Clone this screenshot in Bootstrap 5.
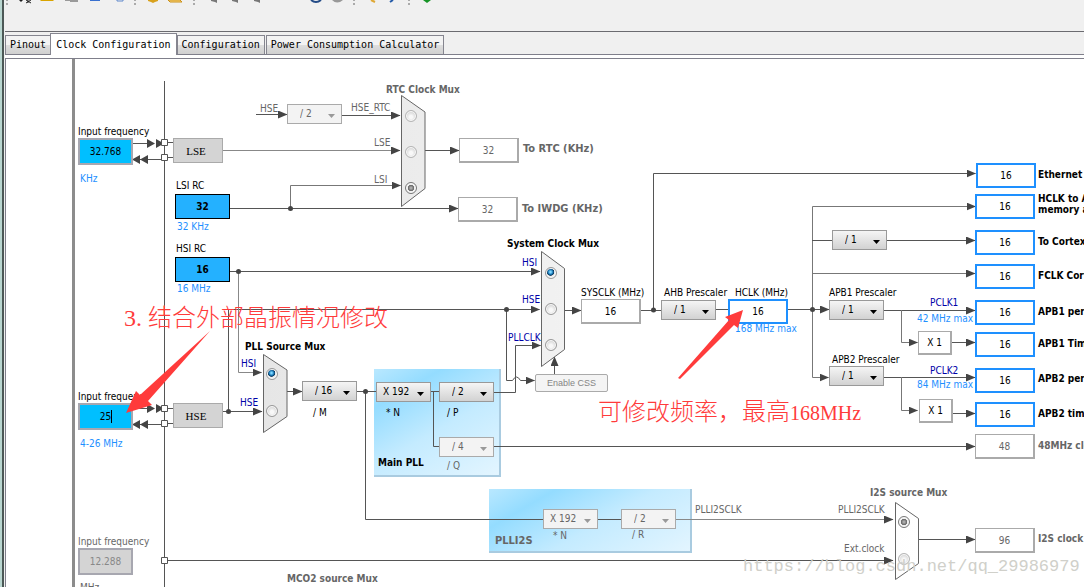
<!DOCTYPE html>
<html lang="en">
<head>
<meta charset="utf-8">
<meta name="viewport" content="width=device-width, initial-scale=1">
<title>Clock Configuration</title>
<link href="https://cdn.jsdelivr.net/npm/bootstrap@5.3.0/dist/css/bootstrap.min.css" rel="stylesheet">
<style>
body{font:10px/14px "DejaVu Sans Condensed","DejaVu Sans",sans-serif;color:#000;background:#f0f0f0}
.shell{border-left:2px solid #b9d6d0;box-shadow:inset 2px 0 #4c5856;padding-left:3px}
.toolstrip{height:32px;border-bottom:1px solid #6b6b70}
.toolstrip svg{display:block}
.tabstrip{height:23px;border-bottom:1px solid #7f7f8b}
.tabstrip button{font:10px/16px "DejaVu Sans Mono",monospace;color:#000;height:19px;padding:0 4px;border:1px solid #85858f;border-bottom:0;border-radius:0;margin-right:1px;background:linear-gradient(#f3f3f3 0 50%,#dedede 51%,#d0d0d0)}
.tabstrip button.active{height:22px;margin:0 0 -1px -2px;padding:0 5px;background:#fff}
.pane{margin:3px 0 0;border:solid #7f7f8b;border-width:1px 0 0 1px}
.sidepane{width:69px;border-right:3px solid #8c8c8c}
.board{min-width:0}
/* diagram coordinates are measured from the window corner */
.at{position:absolute;left:calc((var(--x) - 75)*1px);top:calc((var(--y) - 59)*1px);white-space:nowrap}
.wires{position:absolute;left:0;top:0;pointer-events:none;overflow:visible}
.fld{width:60px;height:25px;border:2px solid #aaa;border-width:1px 2px 2px 1px;background:#fff;text-align:center;padding:0;font-size:10px;color:#000;outline:0;border-radius:0}
.fld.out{border:2px solid #1e90ff}
.fld.pin{width:55px;height:27px;background:#00bfff;border:2px solid #a7a7b0}
.fld.osc{width:55px;height:25px;background:#24b1ff;border:1px solid #000;font-weight:bold}
.fld.off,.grey{color:#666}
.fld.pin.off{background:#d4d4d4;color:#888}
.fld.mul{width:34px;height:24px}
.big{font-size:11px}
.sel{width:55px;height:20px;border:1px solid #999;border-radius:0;appearance:none;font-size:10px;line-height:16px;padding:0 0 0 12px;color:#000;background:url("data:image/svg+xml,%3Csvg xmlns='http://www.w3.org/2000/svg' width='7' height='4'%3E%3Cpath d='M0 0h7L3.5 4z'/%3E%3C/svg%3E") no-repeat right 6px top 9px,linear-gradient(#f5f5f5,#d2d2d2)}
.sel.tight{padding-left:6px}
.sel:disabled{color:#666;opacity:1;background:url("data:image/svg+xml,%3Csvg xmlns='http://www.w3.org/2000/svg' width='7' height='4'%3E%3Cpath fill='%23999' d='M0 0h7L3.5 4z'/%3E%3C/svg%3E") no-repeat right 6px top 9px,#f3f3f3;border-color:#aaa}
.rad{appearance:none;width:12px;height:12px;border-radius:50%;margin:0;border:1px solid #999;background:radial-gradient(circle at 50% 60%,#f8f8f8 20%,#d0d0d0 75%);box-shadow:inset 0 0 0 1px #fafafa}
.rad:checked{background:radial-gradient(circle at 45% 40%,#7fd8ff 0 8%,#1675b4 30%,#0b3557 42%,#eee 50%)}
.rad:disabled{border-color:#b5b5b5}
.rad:disabled:checked{border-color:#777;background:radial-gradient(circle,#aaa 12%,#666 40%,#eee 50%)}
.chip{width:50px;height:25px;border:1px solid #aaa;background:#d4d4d4;font:11px/20px "Liberation Serif",serif;color:#000;padding:0 4px 0 0;border-radius:0;text-align:center}
.css-btn{width:73px;height:18px;border:1px solid #aaa;border-radius:2px;background:#f4f4f4;color:#858585;font:9px/14px "Liberation Sans",sans-serif;padding:0}
.pll{background:linear-gradient(150deg,#b9e8ff,#94dcff 22%,#c4ebff 55%,#e3f5ff);border:solid #a9cbe0;border-width:0 2px 2px 0}
.blue{color:#1e90ff}.sig{color:#0000a8}
.note{font:300 24px/30px "Noto Sans CJK SC",sans-serif;color:#ff3b3b}
.note span{font-family:"Liberation Serif",serif}
.note .rate{font-size:20px}
.wm{font:17px/22px "Liberation Mono",monospace;color:#d0d0ca;pointer-events:none}
</style>
</head>
<body>
<main class="shell vh-100 overflow-hidden d-flex flex-column">
<header class="toolstrip flex-shrink-0">
<svg width="440" height="7" viewBox="5 0 440 7" aria-hidden="true">
<g fill="#aaa"><path d="M6 0h2v1h-2zM6 3h2v2h-2zM134 0h2v1h-2zM134 3h2v2h-2zM193 0h2v1h-2zM193 3h2v2h-2zM353 0h2v1h-2zM353 3h2v2h-2zM408 0h2v1h-2zM408 3h2v2h-2z"/></g>
<path d="M20 0h2v1h-2zM26 0l5 3M31 0l-5 3M28 0v3" stroke="#222"/>
<path d="M40 0h14l-1 1H41z" fill="#d9a400"/><path d="M65 0h13v2H70V1h-5z" fill="#9a9a9a"/><path d="M90 0h10v1H90z" fill="#3970cf"/>
<path d="M117 0v1h6V0" fill="none" stroke="#5f88cc"/><path d="M148 0h10v1l-3 1-2 1-2-1-3-1z" fill="#d8a11c"/><path d="M168 0h12l2 2H170z" fill="#ffd97c" stroke="#c98f18"/>
<path d="M211 0h6v3l-2-1-4-1zM232 0h6v3l-2-1-4-1zM254 0h6v3l-2-1-4-1z" fill="#777"/>
<path d="M311 0q5 4 10 0" fill="none" stroke="#244c87" stroke-width="2"/><path d="M332 0q5 5 11 0" fill="#999"/><path d="M371 0l4 2" stroke="#dfa834" stroke-width="2"/><path d="M393 0l-3 2" stroke="#245aa8" stroke-width="2"/><path d="M423 0h8l-4 3z" fill="#169426"/>
</svg>
</header>
<nav class="tabstrip d-flex align-items-end flex-shrink-0" role="tablist">
<button type="button" role="tab">Pinout</button><button type="button" role="tab" class="active" aria-selected="true">Clock Configuration</button><button type="button" role="tab">Configuration</button><button type="button" role="tab">Power Consumption Calculator</button>
</nav>
<section class="flex-grow-1 bg-white d-flex flex-column">
<div class="pane d-flex flex-grow-1">
<aside class="sidepane flex-shrink-0"></aside>
<div class="board flex-grow-1 position-relative">

<div class="at pll" style="--x:374;--y:369;width:127px;height:108px"></div>
<div class="at pll" style="--x:489;--y:489;width:203px;height:64px"></div>

<svg class="wires" width="1009" height="528" viewBox="75 59 1009 528" aria-hidden="true">
<defs>
<marker id="arr" markerUnits="userSpaceOnUse" markerWidth="10" markerHeight="8" refX="9" refY="4" orient="auto"><path d="M0 0l9.500 4L0 8z" fill="#444"/></marker>
<linearGradient id="mx"><stop stop-color="#e6e6e6"/><stop offset="1" stop-color="#fff"/></linearGradient>
</defs>
<g fill="none" stroke="#555">
<path d="M164.500 81v506"/>
<path d="M133 143.500h20M133 159.500h28M133 408.500h20M133 424.500h28M168 142.500h6M168 157.500h6M168 408.500h6M168 423.500h6"/>
<g marker-end="url(#arr)">
<path d="M256 114.500h31"/><path d="M342 115.500h58"/><path d="M223 150.500h177" stroke="#888"/><path d="M290.500 208v-22.500h110" stroke="#777"/><path d="M230 208.500h228"/><path d="M425 150.500h34"/>
<path d="M230 271.500h310"/><path d="M228.500 411V309.500h311"/><path d="M223 411.500h39"/><path d="M238.500 272v100.500h23" stroke="#888"/><path d="M287 391.500h15"/>
<path d="M506.500 309v71.500h6q4-7 8 0h14"/><path d="M494 392.500h21.500v-47h25"/><path d="M554.500 374v-17"/><path d="M564 310.500h17"/>
<path d="M653.500 310V173.500h322"/><path d="M788 309.500h41"/><path d="M812.500 310V206.500h163" stroke="#777"/><path d="M887 240.500h88"/><path d="M812 273.500h163" stroke="#777"/><path d="M812.500 310v67.500h16" stroke="#777"/>
<path d="M884 310.500h91"/><path d="M901.500 310v32.500h16" stroke="#777"/><path d="M952 342.500h23"/><path d="M884 377.500h91"/><path d="M901.500 377v33.500h16" stroke="#777"/><path d="M953 413.500h22"/>
<path d="M494 446.500h481"/><path d="M676 519.500h217" stroke="#888"/><path d="M168 560.500h725"/><path d="M918 539.500h57"/>
</g>
<path d="M357 391.500h17M365.500 391v128.500h178M374 391.500h67M433.500 391v55.500h7M598 519.500h23M641 310.500h20M716 309.500h12M812 240.500h20"/>
</g>
<g fill="#444"><circle cx="290.500" cy="208.500" r="2.500"/><circle cx="238.500" cy="271.500" r="2.500"/><circle cx="228.500" cy="411.500" r="2.500"/><circle cx="506.500" cy="309.500" r="2.500"/><circle cx="365.500" cy="391.500" r="2.500"/><circle cx="653.500" cy="310" r="2.500"/><circle cx="812.500" cy="309.500" r="2.500"/>
<path d="M147 139l8 4.500-8 4.500zM156 139l8 4.500-8 4.500zM148 155l-8 4.500 8 4.500zM140 155l-8 4.500 8 4.500zM147 404l8 4.500-8 4.500zM156 404l8 4.500-8 4.500zM148 420l-8 4.500 8 4.500zM140 420l-8 4.500 8 4.500z"/></g>
<path d="M161.500 139.500h6v6h-6zM161.500 154.500h6v6h-6zM161.500 405.500h6v6h-6zM161.500 420.500h6v6h-6zM161.500 557.500h6v6h-6z" fill="#fff" stroke="#555"/>
<path d="M401.500 95.500v111l23.500-18V112zM541.500 251.500v115l23-17v-81zM263.500 354.500v78l23.500-16v-46.500zM895.500 502.500v77l23-16v-45z" fill="url(#mx)" stroke="#666"/>
</svg>

<!-- external inputs and oscillators -->
<label class="at" for="lse-f" style="--x:78;--y:125">Input frequency</label><input id="lse-f" class="at fld pin" style="--x:78;--y:138" value="32.768"><span class="at blue" style="--x:80;--y:172">KHz</span>
<label class="at" for="hse-f" style="--x:78;--y:390">Input frequency</label><input id="hse-f" class="at fld pin" style="--x:78;--y:403" value="25"><span class="at blue" style="--x:80;--y:437">4-26 MHz</span>
<label class="at grey" for="i2s-f" style="--x:78;--y:535">Input frequency</label><input id="i2s-f" class="at fld pin off" style="--x:78;--y:548" value="12.288" disabled><span class="at grey" style="--x:80;--y:581">MHz</span>
<button type="button" class="at chip" style="--x:173;--y:138">LSE</button><button type="button" class="at chip" style="--x:173;--y:403">HSE</button>
<label class="at" for="lsi" style="--x:176;--y:179">LSI RC</label><input id="lsi" class="at fld osc" style="--x:175;--y:194" value="32" readonly><span class="at blue" style="--x:177;--y:220">32 KHz</span>
<label class="at" for="hsi" style="--x:176;--y:242">HSI RC</label><input id="hsi" class="at fld osc" style="--x:175;--y:257" value="16" readonly><span class="at blue" style="--x:177;--y:282">16 MHz</span>

<!-- RTC mux -->
<b class="at grey" style="--x:386;--y:83">RTC Clock Mux</b>
<label class="at grey" for="rtcdiv" style="--x:260;--y:102">HSE</label><select id="rtcdiv" class="at sel" style="--x:287;--y:104" disabled><option>/ 2</option></select>
<label class="at grey" for="r1" style="--x:351;--y:101">HSE_RTC</label><input type="radio" name="rtc" id="r1" class="at rad" style="--x:405;--y:110" disabled>
<label class="at grey" for="r2" style="--x:374;--y:136">LSE</label><input type="radio" name="rtc" id="r2" class="at rad" style="--x:405;--y:146" disabled>
<label class="at grey" for="r3" style="--x:374;--y:173">LSI</label><input type="radio" name="rtc" id="r3" class="at rad" style="--x:405;--y:182" checked disabled>
<input id="tortc" class="at fld off" style="--x:459;--y:138" value="32" readonly><label for="tortc" class="at grey fw-bold big" style="--x:523;--y:142">To RTC (KHz)</label>
<input id="toiw" class="at fld off" style="--x:458;--y:197" value="32" readonly><label for="toiw" class="at grey fw-bold big" style="--x:522;--y:202">To IWDG (KHz)</label>

<!-- system clock mux -->
<b class="at" style="--x:507;--y:237">System Clock Mux</b>
<label class="at sig" for="s1" style="--x:522;--y:256">HSI</label><input type="radio" name="sys" id="s1" class="at rad" style="--x:545;--y:267" checked>
<label class="at sig" for="s2" style="--x:522;--y:293">HSE</label><input type="radio" name="sys" id="s2" class="at rad" style="--x:545;--y:303">
<label class="at sig" for="s3" style="--x:508;--y:331">PLLCLK</label><input type="radio" name="sys" id="s3" class="at rad" style="--x:545;--y:339">
<button type="button" class="at css-btn" style="--x:535;--y:374" disabled>Enable CSS</button>
<label class="at" for="sysclk" style="--x:581;--y:286">SYSCLK (MHz)</label><input id="sysclk" class="at fld" style="--x:581;--y:299" value="16" readonly>
<label class="at" for="ahb" style="--x:664;--y:286">AHB Prescaler</label><select id="ahb" class="at sel" style="--x:661;--y:300"><option>/ 1</option></select>
<label class="at" for="hclk" style="--x:735;--y:286">HCLK (MHz)</label><input id="hclk" class="at fld out" style="--x:728;--y:299" value="16"><span class="at blue" style="--x:735;--y:322">168 MHz max</span>

<!-- PLL -->
<b class="at" style="--x:245;--y:340">PLL Source Mux</b>
<label class="at sig" for="p1" style="--x:241;--y:357">HSI</label><input type="radio" name="pll" id="p1" class="at rad" style="--x:266;--y:368" checked>
<label class="at sig" for="p2" style="--x:240;--y:396">HSE</label><input type="radio" name="pll" id="p2" class="at rad" style="--x:266;--y:405">
<select id="pm" class="at sel" style="--x:302;--y:381"><option>/ 16</option></select><label class="at" for="pm" style="--x:313;--y:406">/ M</label>
<select id="pn" class="at sel tight" style="--x:376;--y:382"><option>X 192</option></select><label class="at" for="pn" style="--x:386;--y:406">* N</label>
<select id="pp" class="at sel" style="--x:439;--y:382"><option>/ 2</option></select><label class="at" for="pp" style="--x:447;--y:406">/ P</label>
<select id="pq" class="at sel" style="--x:439;--y:437" disabled><option>/ 4</option></select><label class="at grey" for="pq" style="--x:447;--y:459">/ Q</label>
<b class="at" style="--x:378;--y:456">Main PLL</b>
<select id="in" class="at sel tight" style="--x:543;--y:509" disabled><option>X 192</option></select><label class="at grey" for="in" style="--x:553;--y:529">* N</label>
<select id="ir" class="at sel" style="--x:621;--y:509" disabled><option>/ 2</option></select><label class="at grey" for="ir" style="--x:632;--y:528">/ R</label>
<b class="at grey big" style="--x:495;--y:534">PLLI2S</b>
<b class="at grey" style="--x:287;--y:572">MCO2 source Mux</b>

<!-- bus clocks -->
<select aria-label="Cortex prescaler" class="at sel" style="--x:832;--y:230"><option>/ 1</option></select>
<label class="at" for="apb1" style="--x:829;--y:286">APB1 Prescaler</label><select id="apb1" class="at sel" style="--x:829;--y:300"><option>/ 1</option></select>
<label class="at" for="apb2" style="--x:832;--y:353">APB2 Prescaler</label><select id="apb2" class="at sel" style="--x:829;--y:366"><option>/ 1</option></select>
<span class="at sig" style="--x:930;--y:296">PCLK1</span><span class="at blue" style="--x:917;--y:312">42 MHz max</span>
<span class="at sig" style="--x:930;--y:364">PCLK2</span><span class="at blue" style="--x:917;--y:378">84 MHz max</span>
<input aria-label="APB1 timer multiplier" class="at fld mul" style="--x:918;--y:331" value="X 1" readonly><input aria-label="APB2 timer multiplier" class="at fld mul" style="--x:919;--y:399" value="X 1" readonly>
<input id="o1" class="at fld out" style="--x:976;--y:163" value="16"><label for="o1" class="at fw-bold" style="--x:1038;--y:168">Ethernet</label>
<input id="o2" class="at fld out" style="--x:975;--y:194" value="16"><label for="o2" class="at fw-bold" style="--x:1038;--y:193;line-height:11px">HCLK to AHB bus,<br>memory and DMA</label>
<input id="o3" class="at fld out" style="--x:975;--y:230" value="16"><label for="o3" class="at fw-bold" style="--x:1038;--y:235">To Cortex</label>
<input id="o4" class="at fld out" style="--x:975;--y:264" value="16"><label for="o4" class="at fw-bold" style="--x:1038;--y:269">FCLK Cortex</label>
<input id="o5" class="at fld out" style="--x:975;--y:300" value="16"><label for="o5" class="at fw-bold" style="--x:1038;--y:305">APB1 peripheral</label>
<input id="o6" class="at fld out" style="--x:975;--y:332" value="16"><label for="o6" class="at fw-bold" style="--x:1038;--y:337">APB1 Timer</label>
<input id="o7" class="at fld out" style="--x:975;--y:368" value="16"><label for="o7" class="at fw-bold" style="--x:1038;--y:372">APB2 peripheral</label>
<input id="o8" class="at fld out" style="--x:975;--y:402" value="16"><label for="o8" class="at fw-bold" style="--x:1038;--y:407">APB2 timer</label>
<input id="o9" class="at fld off" style="--x:975;--y:434" value="48" readonly><label for="o9" class="at fw-bold grey" style="--x:1038;--y:439">48MHz clocks</label>

<!-- I2S -->
<span class="at grey" style="--x:695;--y:503">PLLI2SCLK</span><b class="at grey" style="--x:870;--y:486">I2S source Mux</b>
<label class="at grey" for="i1" style="--x:838;--y:503">PLLI2SCLK</label><input type="radio" name="i2s" id="i1" class="at rad" style="--x:898;--y:516" checked disabled>
<label class="at grey" for="i2" style="--x:844;--y:542">Ext.clock</label><input type="radio" name="i2s" id="i2" class="at rad" style="--x:898;--y:553" disabled>
<input id="o10" class="at fld off" style="--x:975;--y:528" value="96" readonly><label for="o10" class="at fw-bold grey" style="--x:1038;--y:532">I2S clock</label>

<!-- callouts -->
<svg class="wires" width="1009" height="528" viewBox="75 59 1009 528" aria-hidden="true">
<path d="M111.500 410v13" stroke="#000"/>
<g fill="#ff3b3b"><path d="M210 331L148 401l4 4-26 8 10-22 4 4z"/><path d="M743 310l-18 7 4 3-51 58 2 1 54-54 4 3z"/></g>
</svg>
<div class="at note" style="--x:124;--y:301"><span>3. </span>结合外部晶振情况修改</div>
<div class="at note" style="--x:598;--y:395">可修改频率，最高<span class="rate">168MHz</span></div>
<div class="at wm" style="--x:743;--y:556">https://blog.csdn.net/qq_29986979</div>
</div>
</div>
</section>
</main>
<script src="https://cdn.jsdelivr.net/npm/bootstrap@5.3.0/dist/js/bootstrap.bundle.min.js"></script>
</body>
</html>
